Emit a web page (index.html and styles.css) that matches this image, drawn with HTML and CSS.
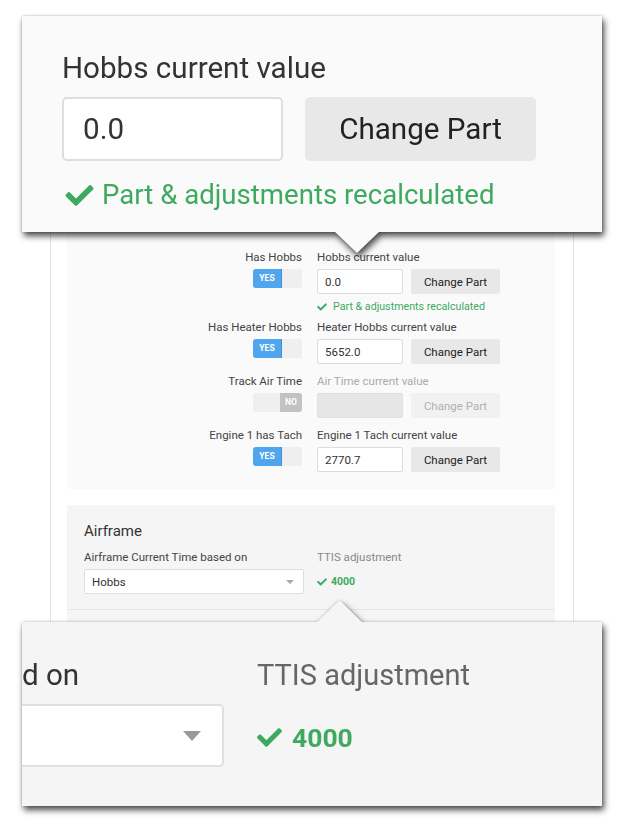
FILE: index.html
```html
<!DOCTYPE html>
<html lang="en">
<head>
<meta charset="utf-8">
<title>Meters</title>
<link rel="stylesheet" href="styles.css">
</head>
<body>
<div class="card">
  <section class="panel panel-meters">
    <div class="row">
      <div class="lab lab-left">Has Hobbs</div>
      <div class="lab">Hobbs current value</div>
      <div class="ctl-left"><span class="toggle"><span class="on">YES</span><span class="rest"></span></span></div>
      <div class="ctl"><input class="field" type="text" value="0.0" readonly><button class="btn" type="button">Change Part</button></div>
      <div></div>
      <div class="msg"><svg class="chk-s" viewBox="0 64 512 384"><path d="M173.9 439.4l-166.4-166.4c-10-10-10-26.2 0-36.2l36.2-36.2c10-10 26.2-10 36.2 0L192 312.7 432.1 72.6c10-10 26.2-10 36.2 0l36.2 36.2c10 10 10 26.2 0 36.2l-294.4 294.4c-10 10-26.2 10-36.2 0z"/></svg>Part &amp; adjustments recalculated</div>
    </div>
    <div class="row">
      <div class="lab lab-left">Has Heater Hobbs</div>
      <div class="lab">Heater Hobbs current value</div>
      <div class="ctl-left"><span class="toggle"><span class="on">YES</span><span class="rest"></span></span></div>
      <div class="ctl"><input class="field" type="text" value="5652.0" readonly><button class="btn" type="button">Change Part</button></div>
    </div>
    <div class="row">
      <div class="lab lab-left">Track Air Time</div>
      <div class="lab lab-disabled">Air Time current value</div>
      <div class="ctl-left"><span class="toggle toggle-off"><span class="rest-off"></span><span class="off">NO</span></span></div>
      <div class="ctl"><input class="field field-disabled" type="text" value="" disabled><button class="btn btn-disabled" type="button" disabled>Change Part</button></div>
    </div>
    <div class="row">
      <div class="lab lab-left">Engine 1 has Tach</div>
      <div class="lab">Engine 1 Tach current value</div>
      <div class="ctl-left"><span class="toggle"><span class="on">YES</span><span class="rest"></span></span></div>
      <div class="ctl"><input class="field" type="text" value="2770.7" readonly><button class="btn" type="button">Change Part</button></div>
    </div>
  </section>

  <section class="panel panel-airframe">
    <h3 class="panel-title">Airframe</h3>
    <div class="af-grid">
      <div class="lab">Airframe Current Time based on</div>
      <div class="lab lab-muted">TTIS adjustment</div>
      <div class="select"><span>Hobbs</span><span class="caret"></span></div>
      <div class="ttis"><svg class="chk-s" viewBox="0 64 512 384"><path d="M173.9 439.4l-166.4-166.4c-10-10-10-26.2 0-36.2l36.2-36.2c10-10 26.2-10 36.2 0L192 312.7 432.1 72.6c10-10 26.2-10 36.2 0l36.2 36.2c10 10 10 26.2 0 36.2l-294.4 294.4c-10 10-26.2 10-36.2 0z"/></svg>4000</div>
    </div>
  </section>

  <section class="panel panel-next"></section>
</div>

<div class="callout callout-top">
  <div class="co-body">
    <div class="big-lab">Hobbs current value</div>
    <div class="big-ctl">
      <input class="big-field" type="text" value="0.0" readonly>
      <button class="big-btn" type="button">Change Part</button>
    </div>
    <div class="big-msg"><svg class="chk-b" viewBox="0 64 512 384"><path d="M173.9 439.4l-166.4-166.4c-10-10-10-26.2 0-36.2l36.2-36.2c10-10 26.2-10 36.2 0L192 312.7 432.1 72.6c10-10 26.2-10 36.2 0l36.2 36.2c10 10 10 26.2 0 36.2l-294.4 294.4c-10 10-26.2 10-36.2 0z"/></svg>Part &amp; adjustments recalculated</div>
  </div>
  <div class="co-arrow-down"></div>
</div>

<div class="callout callout-bottom">
  <div class="co-arrow-up"></div>
  <div class="co-body co-body-b">
    <div class="b-left">
      <div class="big-lab">Airframe Current Time based on</div>
      <div class="big-select"><span class="big-caret"></span></div>
    </div>
    <div class="b-right">
      <div class="big-lab big-lab-muted">TTIS adjustment</div>
      <div class="big-ttis"><svg class="chk-m" viewBox="0 64 512 384"><path d="M173.9 439.4l-166.4-166.4c-10-10-10-26.2 0-36.2l36.2-36.2c10-10 26.2-10 36.2 0L192 312.7 432.1 72.6c10-10 26.2-10 36.2 0l36.2 36.2c10 10 10 26.2 0 36.2l-294.4 294.4c-10 10-26.2 10-36.2 0z"/></svg>4000</div>
    </div>
  </div>
</div>
</body>
</html>
```

FILE: styles.css
```css
* { box-sizing: border-box; }

html, body { margin: 0; padding: 0; }

body {
  width: 622px;
  height: 828px;
  overflow: hidden;
  position: relative;
  background: #fff;
  font-family: Roboto, "Liberation Sans", sans-serif;
  color: #444;
}

/* ---------- base page ---------- */
.card {
  margin: 180px 0 0 50px;
  width: 524px;
  height: 620px;
  border: 1px solid #e2e2e2;
  border-top: none;
  padding: 10px 18px 0 16px;
  background: #fff;
  display: flex;
  flex-direction: column;
}

.panel { width: 488px; }

.panel-meters {
  background: #fafafa;
  padding: 60px 17px 17px;
}

.row {
  display: grid;
  grid-template-columns: 218px 1fr;
  column-gap: 15px;
  row-gap: 5px;
  margin-bottom: 10px;
}
.row:last-child { margin-bottom: 0; }

.lab {
  font-size: 11.5px;
  line-height: 14px;
  color: #444;
  white-space: nowrap;
}
.lab-left { text-align: right; }
.lab-disabled { color: #aaa; }
.lab-muted { color: #888; }

.ctl-left { display: flex; justify-content: flex-end; }
.ctl { display: flex; gap: 8px; height: 25px; }

.toggle {
  display: flex;
  width: 49px;
  height: 19px;
  border-radius: 3px;
  overflow: hidden;
  background: #ececec;
}
.toggle .on {
  width: 29px;
  background: #4fa6ee;
  color: #fff;
  font-size: 8.5px;
  font-weight: 700;
  line-height: 19px;
  text-align: center;
  border-right: 1px solid #3f8fd6;
}
.toggle .rest { flex: 1; background: #efefef; }
.toggle-off .rest-off { width: 27px; background: #efefef; }
.toggle-off .off {
  flex: 1;
  background: #c2c2c2;
  color: #fff;
  font-size: 8.5px;
  font-weight: 700;
  line-height: 19px;
  text-align: center;
}

.field {
  width: 86px;
  height: 25px;
  margin: 0;
  border: 1px solid #dcdcdc;
  border-radius: 2px;
  background: #fff;
  padding: 0 0 0 7px;
  font-family: inherit;
  font-size: 11.5px;
  color: #333;
  outline: none;
}
.field-disabled { background: #e6e6e6; border-color: #e0e0e0; }

.btn {
  width: 89px;
  height: 25px;
  margin: 0;
  border: none;
  border-radius: 2px;
  background: #e8e8e8;
  font-family: inherit;
  font-size: 11.5px;
  color: #222;
  padding: 0;
}
.btn-disabled { background: #f1f1f1; color: #b0b0b0; }

.msg {
  margin: 1px 0 -4px;
  display: flex;
  align-items: center;
  gap: 6px;
  font-size: 10.7px;
  line-height: 14px;
  color: #3daa5f;
  white-space: nowrap;
}
.chk-s { width: 10px; height: 8px; fill: #3daa5f; flex: none; }

.panel-airframe {
  margin-top: 16px;
  background: #f5f5f5;
  padding: 17px 17px 15px;
  border-bottom: 1px solid #e6e6e6;
}
.panel-title {
  margin: 0;
  font-size: 15px;
  line-height: 18px;
  font-weight: 400;
  color: #333;
}
.af-grid {
  margin-top: 10px;
  display: grid;
  grid-template-columns: 220px 220px;
  column-gap: 13px;
  row-gap: 5px;
}
.select {
  height: 25px;
  background: #fff;
  border: 1px solid #dedede;
  border-radius: 2px;
  display: flex;
  align-items: center;
  justify-content: space-between;
  padding: 0 9px 0 7px;
  font-size: 11.5px;
  color: #333;
}
.caret {
  width: 0;
  height: 0;
  border-left: 4px solid transparent;
  border-right: 4px solid transparent;
  border-top: 4px solid #aaa;
}
.ttis {
  height: 25px;
  display: flex;
  align-items: center;
  gap: 4px;
  font-size: 10.5px;
  font-weight: 700;
  color: #3daa5f;
}

.panel-next { flex: 1; background: #f5f5f5; }

/* ---------- magnified callouts ---------- */
.callout {
  position: absolute;
  left: 22px;
  width: 580px;
  filter: drop-shadow(0 0 1px rgba(0, 0, 0, 0.22)) drop-shadow(2px 4px 3px rgba(0, 0, 0, 0.7));
}
.callout-top { top: 16px; }
.callout-bottom { top: 622px; }

.co-body {
  position: relative;
  height: 216px;
  background: #fafafa;
  padding: 34px 40px 0;
}

.co-arrow-down {
  position: absolute;
  top: 216px;
  left: 313px;
  width: 44px;
  height: 21px;
  background: #fafafa;
  clip-path: polygon(0 0, 100% 0, 50% 100%);
}

.big-lab {
  font-size: 29.6px;
  line-height: 36px;
  color: #333;
  white-space: nowrap;
}
.big-lab-muted { color: #666; font-size: 29px; }

.big-ctl { display: flex; gap: 22px; margin-top: 11px; }
.big-field {
  width: 221px;
  height: 64px;
  margin: 0;
  border: 2px solid #dedede;
  border-radius: 5px;
  background: #fff;
  padding: 0 0 0 19px;
  font-family: inherit;
  font-size: 29.6px;
  color: #333;
  outline: none;
}
.big-btn {
  width: 231px;
  height: 64px;
  margin: 0;
  border: none;
  border-radius: 5px;
  background: #e8e8e8;
  padding: 0;
  font-family: inherit;
  font-size: 29.6px;
  color: #222;
}

.big-msg {
  margin-top: 16px;
  display: flex;
  align-items: center;
  gap: 8px;
  font-size: 27.6px;
  line-height: 36px;
  color: #3daa5f;
  white-space: nowrap;
}
.chk-b { width: 29px; height: 21px; margin-left: 3px; fill: #3daa5f; flex: none; }

.co-body-b {
  height: 184px;
  background: #f5f5f5;
  padding: 35px 0 0;
  display: flex;
  gap: 33px;
  overflow: hidden;
}
.b-left { flex: 0 0 567px; margin-left: -365px; }
.b-left .big-lab { margin-left: 2px; }
.big-select {
  margin-top: 11px;
  height: 63px;
  background: #fff;
  border: 2px solid #e0e0e0;
  border-radius: 5px;
  display: flex;
  align-items: center;
  justify-content: flex-end;
  padding: 0 21px 0 18px;
}
.big-caret {
  width: 0;
  height: 0;
  border-left: 9px solid transparent;
  border-right: 9px solid transparent;
  border-top: 10px solid #9a9a9a;
}
.big-ttis {
  margin-top: 11px;
  height: 63px;
  padding-top: 4px;
  display: flex;
  align-items: center;
  gap: 10px;
  font-size: 26.5px;
  font-weight: 700;
  color: #3daa5f;
}
.chk-m { width: 25px; height: 19px; fill: #3daa5f; flex: none; }

.co-arrow-up {
  position: absolute;
  top: -22px;
  left: 295px;
  width: 45px;
  height: 22px;
  background: #f5f5f5;
  clip-path: polygon(50% 0, 100% 100%, 0 100%);
}
```
